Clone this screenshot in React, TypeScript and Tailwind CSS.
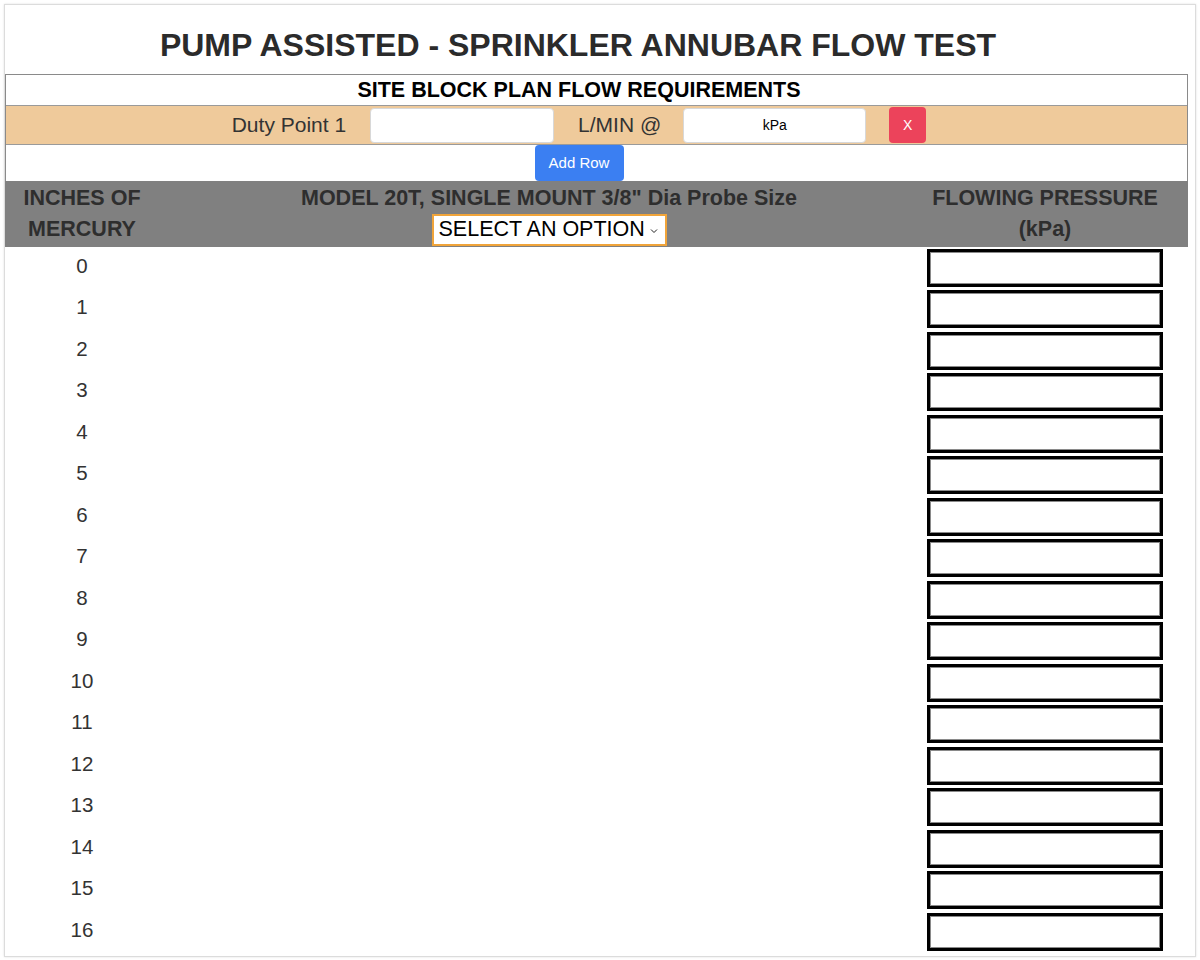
const rows = Array.from({ length: 17 }, (_, i) => i);

export default function App() {
  return (
    <div className="min-h-screen bg-white p-1 font-['Liberation_Sans',Arial,sans-serif]">
      <div className="h-[953px] w-[1192px] overflow-hidden border border-[#dcdcdc] bg-white shadow-[0_0_2px_rgba(0,0,0,0.12)]">
        <div className="w-[1146px]">
          <h1 className="pt-[23px] pb-[11px] text-center text-[32px] leading-[35px] font-bold text-[#2b2b2b]">
            PUMP ASSISTED - SPRINKLER ANNUBAR FLOW TEST
          </h1>
        </div>

        {/* flow requirements block */}
        <div className="w-[1183px] border-x border-t border-[#8a8a8a]">
          <div className="w-[1146px] h-[30px] text-center text-[21.5px] leading-[30px] font-bold text-black">
            SITE BLOCK PLAN FLOW REQUIREMENTS
          </div>
          <div className="h-[40px] border-y border-[#9a9a9a] bg-[#efca9b]">
            <div className="flex h-full w-[1146px] items-center justify-center text-[21px] font-light text-[#333]">
              <span>Duty Point 1</span>
              <input className="ml-[24px] h-[35px] w-[184px] rounded-[4px] border border-[#d8d8d8] bg-white" />
              <span className="ml-[24px]">L/MIN @</span>
              <input
                className="ml-[22px] h-[35px] w-[183px] rounded-[4px] border border-[#d8d8d8] bg-white text-center text-[14px] text-black"
                defaultValue="kPa"
              />
              <button className="ml-[23px] h-[36px] w-[37px] rounded-[4px] bg-[#ec435b] text-[14px] text-white">X</button>
            </div>
          </div>
          <div className="flex h-[36px] w-[1146px] justify-center">
            <button className="h-[36px] w-[89px] rounded-[4px] bg-[#3b7ff2] text-[15px] text-white">Add Row</button>
          </div>
        </div>

        {/* table */}
        <div className="w-[1183px]">
          <div className="grid h-[66px] grid-cols-[154px_780px_212px_1fr] bg-[#808080] pt-[2px] text-[21.5px] leading-[31px] font-bold text-[#2e2e2e]">
            <div className="text-center">
              INCHES OF
              <br />
              MERCURY
            </div>
            <div className="flex flex-col items-center">
              <span className="whitespace-nowrap">MODEL 20T, SINGLE MOUNT 3/8" Dia Probe Size</span>
              <div className="flex h-[32px] w-[235px] items-center border-2 border-[#f0a43a] bg-white pl-[5px] text-[21.5px] font-normal text-black">
                <span className="leading-none whitespace-nowrap">SELECT AN OPTION</span>
                <svg className="ml-[5px] mt-[2px] h-[8px] w-[8px]" viewBox="0 0 8 8" fill="none" stroke="#222" strokeWidth="1">
                  <path d="M1 2.5l3 3 3-3" />
                </svg>
              </div>
            </div>
            <div className="flex flex-col items-center whitespace-nowrap">
              <span>FLOWING PRESSURE</span>
              <span>(kPa)</span>
            </div>
            <div />
          </div>

          {rows.map((n) => (
            <div key={n} className="grid h-[41.5px] grid-cols-[154px_780px_212px_1fr] items-center">
              <div className="pb-[3px] text-center text-[20.5px] font-light text-[#333]">{n}</div>
              <div />
              <div className="flex justify-center">
                <input className="h-[38px] w-[236px] shrink-0 border-[3px] border-black bg-white shadow-[inset_0_0_0_1px_#8a8a8a]" />
              </div>
              <div />
            </div>
          ))}
        </div>
      </div>
    </div>
  );
}
